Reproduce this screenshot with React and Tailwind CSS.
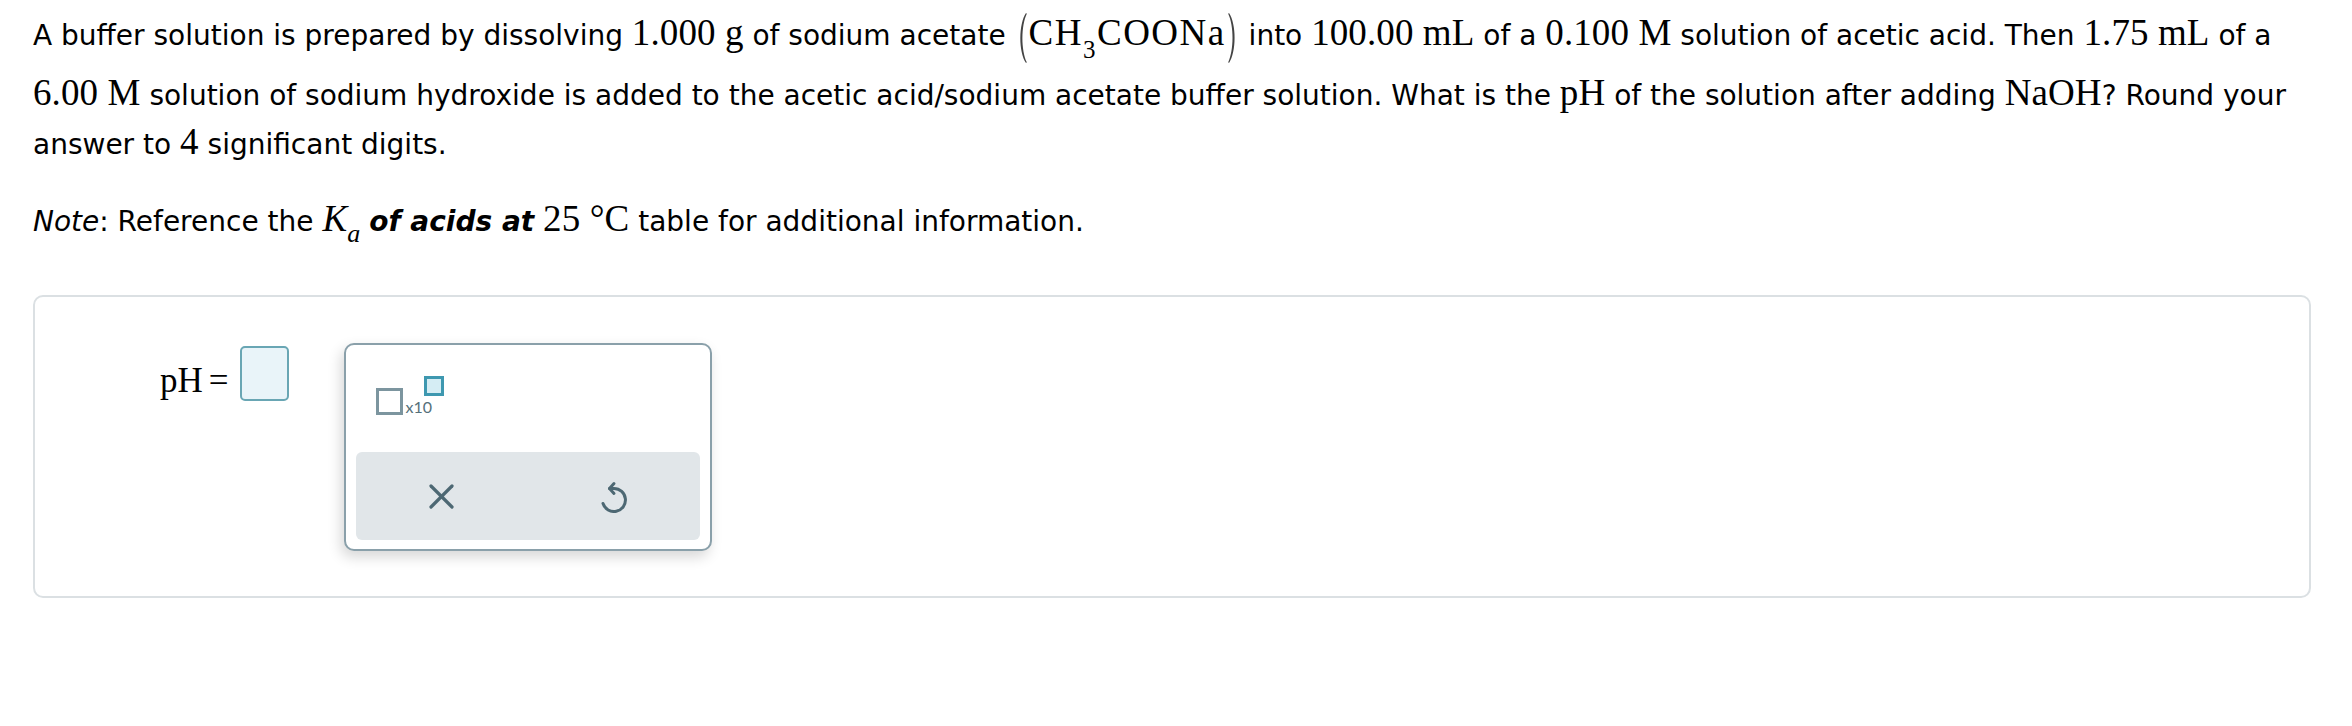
import clsx from "clsx";

function M({ children, className }) {
  return <span className={clsx("font-['Liberation_Serif',serif] text-[37px] leading-none tracking-[0.1px]", className)}>{children}</span>;
}

function Paren({ right }) {
  return (
    <svg width="14" height="52" viewBox="0 0 14 52" className="inline-block align-[-19px]">
      {right ? (
        <path d="M3 1 C10.5 12 10.5 40 3 51 L2.2 50.3 C8 38 8 14 2.2 1.7 Z" fill="#444" />
      ) : (
        <path d="M11 1 C3.5 12 3.5 40 11 51 L11.8 50.3 C6 38 6 14 11.8 1.7 Z" fill="#444" />
      )}
    </svg>
  );
}

function UndoIcon() {
  return (
    <svg width="26" height="33" viewBox="0 0 26 33" fill="none" stroke="#4d6873" strokeWidth="3" strokeLinecap="round" strokeLinejoin="round">
      <path d="M8.5 8.5 H13 A11.5 11.5 0 1 1 2 23.5" />
      <path d="M13 3.5 L8.5 8.5 L13 13.5" />
    </svg>
  );
}

function XIcon() {
  return (
    <svg width="25" height="25" viewBox="0 0 25 25" fill="none" stroke="#4d6873" strokeWidth="3.2" strokeLinecap="round">
      <path d="M2 2 L23 23" />
      <path d="M23 2 L2 23" />
    </svg>
  );
}

export default function App() {
  return (
    <div className="min-h-[726px] w-[2352px] bg-white text-black font-['DejaVu_Sans',sans-serif] text-[28px]">
      <div className="px-[33px] pt-[11px]">
        <div className="h-[60px] leading-[49px] whitespace-nowrap">
          A buffer solution is prepared by dissolving <M>1.000 g</M> of sodium acetate{" "}
          <Paren />
          <M className="tracking-[1.5px]">
            CH<span className="text-[25px] align-[-13px]">3</span>COONa
          </M>
          <Paren right /> into <M>100.00 mL</M> of a <M>0.100 M</M> solution of acetic acid. Then <M>1.75 mL</M> of a
        </div>
        <div className="h-[49px] leading-[49px] whitespace-nowrap">
          <M>6.00 M</M> solution of sodium hydroxide is added to the acetic acid/sodium acetate buffer solution. What is the <M>pH</M> of
          the solution after adding <M>NaOH</M>? Round your
        </div>
        <div className="h-[49px] leading-[49px] whitespace-nowrap">
          answer to <M>4</M> significant digits.
        </div>
        <div className="mt-[28px] h-[49px] leading-[49px] whitespace-nowrap">
          <i>Note</i>: Reference the{" "}
          <M className="italic">
            K<span className="text-[26px] align-[-11px]">a</span>
          </M>{" "}
          <b className="italic">of acids at</b> <M>25 °C</M> table for additional information.
        </div>

        <div className="mt-[49px] w-[2278px] rounded-[10px] border-2 border-[#dbe0e3] pl-[125px] pt-[46px] pb-[45px]">
          <div className="flex items-start">
            <div className="flex items-start pt-[3px]">
              <span className="pt-[17px] font-['Liberation_Serif',serif] text-[35px] leading-[35px]">pH</span>
              <span className="ml-[6px] pt-[17px] font-['Liberation_Serif',serif] text-[35px] leading-[35px]">=</span>
              <div className="ml-[11px] h-[55px] w-[49px] rounded-[5px] border-2 border-[#69a6b4] bg-[#e9f4f9]" />
            </div>

            <div className="ml-[55px] flex h-[208px] w-[368px] flex-col rounded-[10px] border-2 border-[#8aa0aa] bg-white px-[10px] pb-[9px] shadow-[-3px_6px_14px_rgba(0,0,0,0.16)]">
              <div className="flex-1 pl-[20px] pt-[31px]">
                <div className="relative h-[39px] w-[68px]">
                  <div className="absolute left-0 top-[12px] h-[27px] w-[27px] border-[3px] border-[#7c959f]" />
                  <span className="absolute left-[30px] top-[23px] font-['Lato',sans-serif] text-[16px] leading-[16px] text-[#55707a]">x10</span>
                  <div className="absolute left-[48px] top-0 h-[20px] w-[20px] border-[3px] border-[#3e98b0] bg-[#d5edf4]" />
                </div>
              </div>
              <div className="grid h-[88px] grid-cols-2 rounded-[6px] bg-[#e1e6e9]">
                <div className="flex items-center justify-center">
                  <XIcon />
                </div>
                <div className="flex items-center justify-center">
                  <UndoIcon />
                </div>
              </div>
            </div>
          </div>
        </div>
      </div>
    </div>
  );
}
